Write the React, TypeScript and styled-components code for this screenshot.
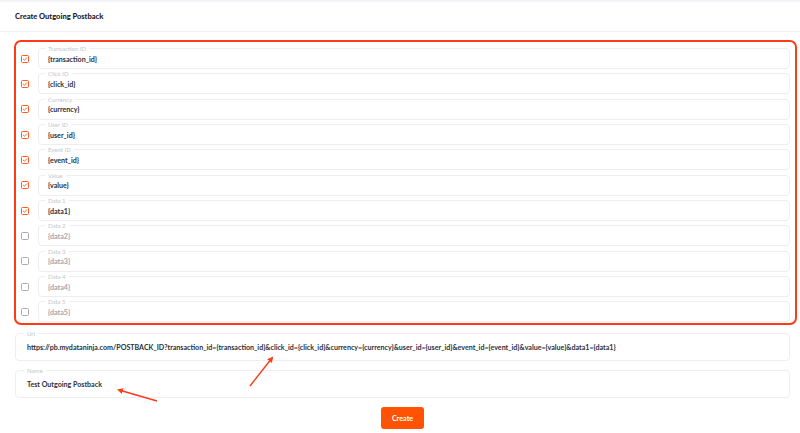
import React from "react";
import styled, { createGlobalStyle } from "styled-components";

const Global = createGlobalStyle`
  html, body { margin: 0; padding: 0; background: #fff; }
  body { font-family: "Lato", "Liberation Sans", sans-serif; }
  * { box-sizing: border-box; }
`;

const Page = styled.div`
  position: relative;
  width: 800px;
  height: 433px;
  overflow: hidden;
  border-top: 2px solid #f1f3f6;
`;

const Header = styled.div`
  height: 30px;
  display: flex;
  align-items: center;
  padding-left: 15px;
  border-bottom: 1px solid #eef0f3;
  font-size: 7.5px;
  font-weight: 900;
  color: #1e2128;
`;

const Content = styled.div`
  padding: 8px 10px 0 15px;
  display: flex;
  flex-direction: column;
`;

const Highlight = styled.div`
  margin: 0 -7px 0 -1px;
  border: 2px solid #ff3a17;
  border-radius: 7px;
  padding: 6px 5px 1px 5px;
  display: flex;
  flex-direction: column;
  gap: 4.35px;
`;

const Row = styled.div`
  display: flex;
  align-items: center;
  gap: 9px;
`;

const Check = styled.span<{ $on: boolean }>`
  width: 8px;
  height: 8px;
  flex: none;
  border-radius: 1.5px;
  border: 1px solid ${(p) => (p.$on ? "#ff5b22" : "#a9acb1")};
  display: flex;
  align-items: center;
  justify-content: center;
`;

const Field = styled.div<{ $h: number; $pad: number }>`
  position: relative;
  flex: 1 1 auto;
  height: ${(p) => p.$h}px;
  border: 1px solid #eceef1;
  border-radius: 4px;
  display: flex;
  align-items: center;
  padding-left: ${(p) => p.$pad}px;
`;

const Label = styled.span<{ $pad: number }>`
  position: absolute;
  top: -4px;
  left: ${(p) => p.$pad - 3}px;
  padding: 0 3px;
  background: #fff;
  font-size: 6px;
  line-height: 7px;
  color: #c3c6cc;
`;

const Value = styled.span<{ $muted?: boolean }>`
  font-size: 7.1px;
  font-weight: 700;
  color: ${(p) => (p.$muted ? "#a2a6ad" : "#2b303a")};
  white-space: nowrap;
  padding-top: 1px;
`;

const BigFields = styled.div`
  margin-top: 8px;
  display: flex;
  flex-direction: column;
  gap: 9px;
`;

const Actions = styled.div`
  display: flex;
  justify-content: center;
  margin-top: 9px;
`;

const Button = styled.button`
  width: 43px;
  height: 22px;
  border: none;
  border-radius: 3px;
  background: #ff5203;
  color: #fff;
  font-family: inherit;
  font-size: 7.2px;
  font-weight: 700;
  padding: 0;
`;

const Arrows = styled.svg`
  position: absolute;
  left: 0;
  top: 0;
  pointer-events: none;
`;

const rows = [
  { label: "Transaction ID", value: "{transaction_id}", on: true },
  { label: "Click ID", value: "{click_id}", on: true },
  { label: "Currency", value: "{currency}", on: true },
  { label: "User ID", value: "{user_id}", on: true },
  { label: "Event ID", value: "{event_id}", on: true },
  { label: "Value", value: "{value}", on: true },
  { label: "Data 1", value: "{data1}", on: true },
  { label: "Data 2", value: "{data2}", on: false },
  { label: "Data 3", value: "{data3}", on: false },
  { label: "Data 4", value: "{data4}", on: false },
  { label: "Data 5", value: "{data5}", on: false },
];

const url =
  "https://pb.mydataninja.com/POSTBACK_ID?transaction_id={transaction_id}&click_id={click_id}&currency={currency}&user_id={user_id}&event_id={event_id}&value={value}&data1={data1}";

export default function App() {
  return (
    <Page>
      <Global />
      <Header>Create Outgoing Postback</Header>
      <Content>
        <Highlight>
          {rows.map((r) => (
            <Row key={r.label}>
              <Check $on={r.on}>
                {r.on && (
                  <svg width="6" height="6" viewBox="0 0 12 12">
                    <path d="M2.5 6.3 L5 8.6 L9.5 3.6" fill="none" stroke="#ff5b22" strokeWidth="1.8" strokeLinecap="round" strokeLinejoin="round" />
                  </svg>
                )}
              </Check>
              <Field $h={21} $pad={9}>
                <Label $pad={9}>{r.label}</Label>
                <Value $muted={!r.on}>{r.value}</Value>
              </Field>
            </Row>
          ))}
        </Highlight>
        <BigFields>
          <Field $h={28} $pad={11}>
            <Label $pad={11}>Url</Label>
            <Value>{url}</Value>
          </Field>
          <Field $h={28} $pad={11}>
            <Label $pad={11}>Name</Label>
            <Value>Test Outgoing Postback</Value>
          </Field>
        </BigFields>
        <Actions>
          <Button>Create</Button>
        </Actions>
      </Content>
      <Arrows width="800" height="433" viewBox="0 0 800 433">
        <defs>
          <marker id="ah" markerWidth="6" markerHeight="6" refX="4" refY="3" orient="auto" markerUnits="userSpaceOnUse">
            <path d="M0 0 L6 3 L0 6 Z" fill="#ff3a17" />
          </marker>
        </defs>
        <line x1="250" y1="384" x2="272" y2="356" stroke="#ff3a17" strokeWidth="1.4" markerEnd="url(#ah)" />
        <line x1="157" y1="399" x2="119" y2="388" stroke="#ff3a17" strokeWidth="1.4" markerEnd="url(#ah)" />
      </Arrows>
    </Page>
  );
}
